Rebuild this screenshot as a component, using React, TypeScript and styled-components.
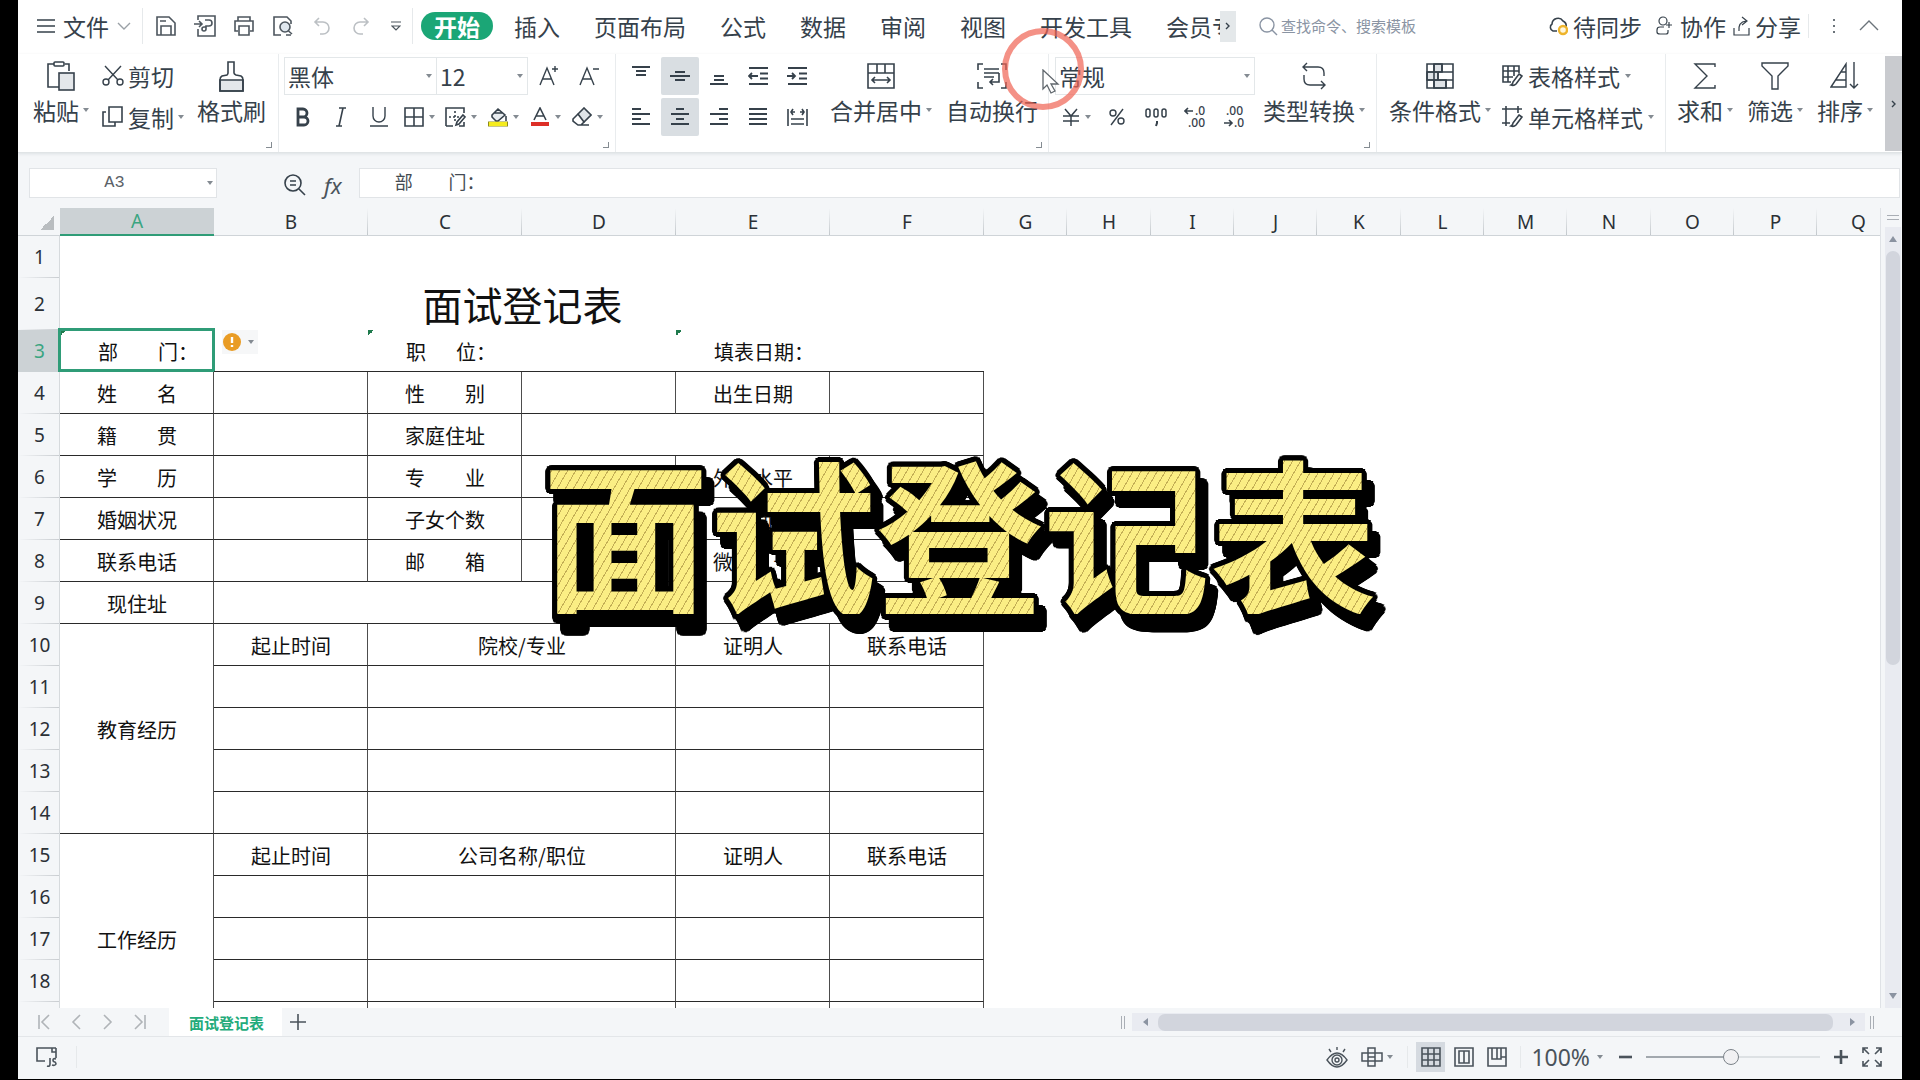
import React from "react";
import styled, { createGlobalStyle, css } from "styled-components";

const UI_FONT = `"Noto Sans CJK SC", "Noto Sans", sans-serif`;
const LATIN_FONT = `"Noto Sans", "Open Sans", "Noto Sans CJK SC", sans-serif`;
const INK = "#36414b";
const GREEN = "#1ba676";
const PANEL = "#f4f6f8";

const GlobalStyle = createGlobalStyle`
  *, *::before, *::after { box-sizing: border-box; }
  body { margin: 0; background: #000; font-family: ${UI_FONT}; color: ${INK}; }
  button, input, select { font: inherit; color: inherit; margin: 0; padding: 0; border: 0; background: none; outline: none; }
  button { cursor: default; white-space: nowrap; }
  select { appearance: none; }
`;

/* ---------- window ---------- */

const Screen = styled.div`
  height: 100vh;
  padding: 0 18px 1px;
  overflow: hidden;
  background: #000;
`;

const Window = styled.main`
  position: relative;
  display: flex;
  flex-direction: column;
  height: 100%;
  overflow: hidden;
  background: #fff;
`;

/* ---------- drawing helpers ---------- */

const Svg = styled.svg`
  display: block;
  flex: none;
  fill: none;
  stroke: currentColor;
  stroke-width: 1.6;
`;

type IconProps = { w: number; h: number; children: React.ReactNode; sw?: number };
const Icon = ({ w, h, children, sw }: IconProps) => (
  <Svg width={w} height={h} viewBox={`0 0 ${w} ${h}`} style={sw ? { strokeWidth: sw } : undefined} aria-hidden="true">
    {children}
  </Svg>
);

const CaretShape = styled.span`
  flex: none;
  width: 0;
  height: 0;
  border: 3px solid transparent;
  border-top: 4px solid #848b92;
  border-bottom: 0;
`;

/* ---------- top bar ---------- */

const TopBar = styled.header`
  display: flex;
  align-items: center;
  flex: none;
  height: 54px;
  padding: 0 23px 2px 19px;
  font-size: 23px;
  line-height: 32px;
`;

const FileButton = styled.button`
  display: flex;
  align-items: center;
  gap: 8px;
  margin-right: 11px;
  & > svg:last-child { color: #9aa0a6; }
`;

const Rule = styled.span<{ $h: number }>`
  flex: none;
  width: 1px;
  height: ${(p) => p.$h}px;
  background: #e6e9eb;
`;

const QuickBar = styled.div`
  display: flex;
  align-items: center;
  padding-left: 3px;
`;

const QuickButton = styled.button<{ $w?: number; $dim?: boolean }>`
  display: flex;
  justify-content: center;
  width: ${(p) => p.$w ?? 39}px;
  color: ${(p) => (p.$dim ? "#bcc0c4" : "#4d565e")};
`;

const TabList = styled.nav`
  display: flex;
  align-items: center;
  gap: 8px;
  flex: 0 0 799px;
  margin-left: 8px;
  padding: 6px 0;
  overflow: hidden;
`;

const MenuTab = styled.button<{ $on?: boolean }>`
  flex: none;
  height: 28px;
  padding: 0 13px;
  border-radius: 14px;
  line-height: 28px;
  ${(p) =>
    p.$on &&
    css`
      background: ${GREEN};
      color: #fff;
      font-weight: 700;
    `}
`;

const MoreTabs = styled.button`
  display: grid;
  place-items: center;
  flex: none;
  width: 16px;
  height: 31px;
  background: #e4e8ea;
`;

const SearchLabel = styled.label`
  display: flex;
  align-items: center;
  flex: 1;
  min-width: 0;
  gap: 2px;
  margin-left: 23px;
  color: #8a94a3;
`;

const SearchInput = styled.input`
  width: 160px;
  font-size: 15px;
  line-height: 24px;
  &::placeholder { color: #8a94a3; opacity: 1; }
`;

const Account = styled.div`
  display: flex;
  align-items: center;
`;

const AccountButton = styled.button`
  display: flex;
  align-items: center;
  gap: 5px;
  margin-right: 7px;
`;

const Trail = styled.div`
  display: flex;
  align-items: center;
  gap: 23px;
  color: #6b737a;
`;

/* ---------- ribbon ---------- */

const Ribbon = styled.section`
  display: flex;
  flex: none;
  height: 99px;
  border-bottom: 1px solid #e0e4e6;
  box-shadow: 0 1px 3px rgba(60, 80, 90, 0.12);
  font-size: 23px;
  line-height: 30px;
  z-index: 1;
`;

const Group = styled.div<{ $l: number; $r: number }>`
  display: flex;
  flex-direction: column;
  flex: none;
  padding: 3px 6px 0 ${(p) => p.$l}px;
  border-right: 1px solid #e9ecee;
  & > :first-child { padding-right: ${(p) => p.$r}px; }
`;

const LastGroup = styled(Group)`
  flex: 1;
  border-right: 0;
`;

const GroupBody = styled.div<{ $gap: number }>`
  display: flex;
  gap: ${(p) => p.$gap}px;
`;

const Launcher = styled.button`
  align-self: flex-end;
  width: 6px;
  height: 6px;
  margin-top: 6px;
  border-right: 1px solid #858c92;
  border-bottom: 1px solid #858c92;
`;

const BigButton = styled.button`
  display: flex;
  flex-direction: column;
  align-items: center;
  gap: 4px;
  height: 79px;
  padding-top: 4px;
`;

const BigIcon = styled.span`
  display: grid;
  place-items: center;
  height: 30px;
`;

const BigLabel = styled.span`
  display: flex;
  align-items: center;
  gap: 4px;
`;

const Rows = styled.div`
  display: grid;
  grid-template-rows: 38px 38px;
  row-gap: 3px;
`;

const Row = styled.div<{ $gap?: number }>`
  display: flex;
  align-items: center;
  gap: ${(p) => p.$gap ?? 0}px;
`;

const TextButton = styled.button<{ $gap: number }>`
  display: flex;
  align-items: center;
  gap: ${(p) => p.$gap}px;
`;

const ToolButton = styled.button<{ $w?: number; $on?: boolean }>`
  display: flex;
  align-items: center;
  justify-content: center;
  gap: 5px;
  width: ${(p) => p.$w ?? 39}px;
  height: 38px;
  border-radius: 2px;
  background: ${(p) => (p.$on ? "#d9dee2" : "none")};
`;

const SelectBox = styled.span<{ $w: number }>`
  display: flex;
  align-items: center;
  width: ${(p) => p.$w}px;
  height: 38px;
  padding: 0 4px 0 3px;
  border: 1px solid #e3e7e9;
  & + & { margin-left: -1px; }
`;

const PlainSelect = styled.select`
  flex: 1;
  min-width: 0;
  height: 34px;
`;

const RibbonScroll = styled.button`
  display: grid;
  place-items: center;
  flex: none;
  width: 17px;
  height: 95px;
  margin-top: 2px;
  background: #c9cbcf;
`;

type BigProps = { label: string; icon: React.ReactNode; caret?: boolean };
const Big = ({ label, icon, caret }: BigProps) => (
  <BigButton>
    <BigIcon>{icon}</BigIcon>
    <BigLabel>
      {label}
      {caret && <CaretShape />}
    </BigLabel>
  </BigButton>
);

/* ---------- formula bar ---------- */

const FormulaBar = styled.section`
  display: flex;
  align-items: center;
  flex: none;
  height: 55px;
  padding: 4px 2px 0 11px;
  background: ${PANEL};
`;

const NameBox = styled.label`
  display: flex;
  align-items: center;
  width: 188px;
  height: 30px;
  padding-right: 3px;
  border: 1px solid #e1e4e7;
  background: #fff;
`;

const NameInput = styled.input`
  flex: 1;
  min-width: 0;
  padding-right: 8px;
  text-align: center;
  font: 17px "Liberation Mono", monospace;
  color: #5b6268;
`;

const FormulaTools = styled.div`
  display: flex;
  align-items: center;
  gap: 18px;
  margin: 4px 17px 0 67px;
`;

const FxButton = styled.button`
  font: italic 22px/24px ${LATIN_FONT};
  color: #4a535b;
`;

const FormulaInput = styled.input`
  flex: 1;
  height: 30px;
  padding: 0 0 4px 35px;
  border: 1px solid #e1e4e7;
  background: #fff;
  font-size: 18px;
  color: #444b52;
`;

/* ---------- grid ---------- */

const Workspace = styled.section`
  display: flex;
  flex: 1;
  min-height: 0;
  background: ${PANEL};
`;

const SheetView = styled.div`
  flex: 1;
  min-width: 0;
  overflow: hidden;
  border-right: 1px solid #dfe2e6;
  background: #fff;
`;

const Sheet = styled.table`
  width: 0;
  table-layout: fixed;
  border-collapse: separate;
  border-spacing: 0;
  font-size: 20px;
  line-height: 26px;
  color: #111;
  white-space: pre;
`;

const SheetRow = styled.tr<{ $h: number }>`
  height: ${(p) => p.$h}px;
`;

const ColHead = styled.th<{ $on?: boolean }>`
  height: 28px;
  padding: 0;
  border-bottom: 1px solid #cfd4d8;
  background: linear-gradient(to bottom, transparent, #c3c8cc) right / 1px 100% no-repeat ${PANEL};
  font: 19px/24px ${LATIN_FONT};
  color: #2b3036;
  ${(p) =>
    p.$on &&
    css`
      border-bottom: 2px solid #2f9c77;
      background: #ccd2d5;
      color: #3aa581;
    `}
`;

const CornerHead = styled(ColHead)`
  background: linear-gradient(135deg, transparent 50%, #b9bdc0 50%) 22px 8px / 14px 14px no-repeat ${PANEL};
`;

const RowHead = styled.th<{ $on?: boolean }>`
  padding: 0 0 0 2px;
  border-right: 1px solid #d6dadd;
  background: linear-gradient(to right, transparent, #c9cdd1) bottom / 100% 1px no-repeat ${PANEL};
  font: 19px/24px ${LATIN_FONT};
  color: #2b3036;
  ${(p) =>
    p.$on &&
    css`
      background: #ccd2d5;
      color: #3aa581;
    `}
`;

const Cell = styled.td<{ $r?: boolean; $b?: boolean; $left?: boolean; $flag?: boolean; $big?: boolean }>`
  position: relative;
  padding: 2px 0 0 ${(p) => (p.$left ? 38 : 1)}px;
  text-align: ${(p) => (p.$left ? "left" : "center")};
  border-right: ${(p) => (p.$r ? "1px solid #4d4d4d" : "0")};
  border-bottom: ${(p) => (p.$b ? "1px solid #2a2a2a" : "0")};
  ${(p) =>
    p.$big &&
    css`
      padding-top: 0;
      font-size: 40px;
      line-height: 44px;
    `}
  ${(p) =>
    p.$flag &&
    css`
      background: linear-gradient(135deg, #1f7a4d 50%, transparent 50%) 0 0 / 6px 6px no-repeat;
    `}
`;

const SelectedCell = styled(Cell)`
  &::after {
    content: "";
    position: absolute;
    inset: -2px -1px 0 -2px;
    border: 3px solid #2f9c77;
  }
`;

const WarningTip = styled.button`
  position: absolute;
  top: 0;
  left: 8px;
  display: flex;
  align-items: center;
  gap: 7px;
  width: 36px;
  height: 24px;
  padding-left: 1px;
  background: #f6f7f8;
`;

/* ---------- scroll bars ---------- */

const VScroll = styled.div`
  display: flex;
  flex-direction: column;
  align-items: center;
  flex: none;
  width: 21px;
  padding: 7px 1px 0 4px;
`;

const VGrip = styled.span`
  width: 12px;
  height: 5px;
  margin-bottom: 7px;
  border: solid #a9aeb5;
  border-width: 1px 0;
`;

const VTrack = styled.div`
  display: flex;
  flex-direction: column;
  align-items: center;
  flex: 1;
  width: 100%;
  background: #e9ebf1;
`;

const VThumb = styled.div`
  width: 14px;
  height: 53%;
  border-radius: 7px;
  background: #d2d5dd;
`;

const Arrow = styled.button<{ $dir: "up" | "down" | "left" | "right" }>`
  display: grid;
  place-items: center;
  flex: none;
  width: ${(p) => (p.$dir === "left" || p.$dir === "right" ? 26 : 16)}px;
  height: ${(p) => (p.$dir === "up" || p.$dir === "down" ? 24 : 16)}px;
  &::before {
    content: "";
    border: 4px solid transparent;
    ${(p) => p.$dir === "up" && "border-bottom: 6px solid #8b93a1; border-top: 0;"}
    ${(p) => p.$dir === "down" && "border-top: 6px solid #8b93a1; border-bottom: 0;"}
    ${(p) => p.$dir === "left" && "border-right: 5px solid #8b93a1; border-left: 0;"}
    ${(p) => p.$dir === "right" && "border-left: 5px solid #8b93a1; border-right: 0;"}
  }
`;

const Spacer = styled.span`
  flex: 1;
`;

/* ---------- sheet tabs ---------- */

const SheetBar = styled.section`
  display: flex;
  align-items: center;
  flex: none;
  height: 29px;
  padding: 0 28px 0 10px;
  border-bottom: 1px solid #e3e6e9;
  background: ${PANEL};
`;

const NavButton = styled.button<{ $dark?: boolean }>`
  display: grid;
  place-items: center;
  width: 32px;
  height: 28px;
  color: ${(p) => (p.$dark ? "#4a535b" : "#b0b4b8")};
`;

const SheetTab = styled.button`
  height: 28px;
  margin-left: 13px;
  padding: 0 18px 0 20px;
  background: #fff;
  font-size: 15px;
  font-weight: 700;
  color: #24ab7b;
`;

const HGrip = styled.span`
  width: 4px;
  height: 13px;
  border: solid #a9aeb5;
  border-width: 0 1px;
`;

const HTrack = styled.div`
  display: flex;
  align-items: center;
  flex: 0 1 733px;
  height: 18px;
  margin: 0 5px 0 7px;
  background: #e9ebf1;
`;

const HThumb = styled.div`
  flex: 1;
  height: 17px;
  margin-right: 6px;
  border-radius: 7px;
  background: #d2d5dd;
`;

/* ---------- status bar ---------- */

const StatusBar = styled.footer`
  display: flex;
  align-items: center;
  flex: none;
  height: 42px;
  padding: 0 20px 2px 18px;
  background: ${PANEL};
  color: #4a535b;
`;

const StatusButton = styled.button<{ $gap?: number }>`
  display: flex;
  align-items: center;
  gap: 4px;
  margin-right: ${(p) => p.$gap ?? 0}px;
`;

const ViewSwitch = styled.div`
  display: flex;
  gap: 4px;
  margin: 0 9px 0 8px;
`;

const ViewButton = styled.button<{ $on?: boolean }>`
  display: grid;
  place-items: center;
  width: 29px;
  height: 30px;
  background: ${(p) => (p.$on ? "#d5dae0" : "none")};
`;

const ZoomButton = styled.button`
  display: flex;
  align-items: center;
  gap: 7px;
  margin: 0 16px 0 10px;
  font: 23px/28px ${LATIN_FONT};
`;

const ZoomSlider = styled.input`
  appearance: none;
  width: 174px;
  height: 18px;
  margin: 0 14px;
  &::-webkit-slider-runnable-track {
    height: 2px;
    background: linear-gradient(to right, #a2a8ae 48%, #dde1e4 48%);
  }
  &::-webkit-slider-thumb {
    appearance: none;
    width: 16px;
    height: 16px;
    margin-top: -7px;
    border: 1px solid #7b8289;
    border-radius: 50%;
    background: #f1f1f3;
  }
`;

/* ---------- overlays ---------- */

const ClickRing = styled.span`
  position: absolute;
  top: 28px;
  left: 984px;
  width: 82px;
  height: 82px;
  border: 6px solid rgba(240, 98, 82, 0.7);
  border-radius: 50%;
  z-index: 3;
  pointer-events: none;
`;

const Pointer = styled.span`
  position: absolute;
  top: 69px;
  left: 1024px;
  color: #5f666c;
  z-index: 4;
`;

/* An even outline of radius r, repeated once as a hard drop shadow. */
const ring = (dx: number, dy: number, r: number) =>
  Array.from({ length: 24 }, (_, i) => {
    const a = (i / 24) * Math.PI * 2;
    return `${(dx + Math.cos(a) * r).toFixed(2)}px ${(dy + Math.sin(a) * r).toFixed(2)}px 0 #000`;
  }).join(",");

const Caption = styled.h1`
  position: absolute;
  top: 446px;
  left: 524px;
  margin: 0;
  z-index: 5;
  font-size: 167px;
  line-height: 168px;
  font-weight: 700;
  white-space: nowrap;
  color: #000;
  text-shadow: ${ring(0, 0, 5)}, ${ring(8, 12, 5)};
  &::after {
    content: attr(data-fill);
    position: absolute;
    inset: 0;
    text-shadow: none;
    color: transparent;
    background: repeating-linear-gradient(120deg, #fbee84 0 6px, #c3ae55 6px 7px);
    background-clip: text;
    -webkit-background-clip: text;
  }
`;

/* ---------- data ---------- */

const menuTabs = ["开始", "插入", "页面布局", "公式", "数据", "审阅", "视图", "开发工具", "会员专享"];
const colWidths = [154, 154, 154, 154, 154, 154, 83, 84, 83, 83, 84, 83, 83, 84, 83, 83, 83];
const letters = "ABCDEFGHIJKLMNOPQ".split("");

type CellSpec = { t?: string; span?: number; rows?: number };
const formRows: { n: number; cells: CellSpec[] }[] = [
  { n: 4, cells: [{ t: "姓　　名" }, {}, { t: "性　　别" }, {}, { t: "出生日期" }, {}] },
  { n: 5, cells: [{ t: "籍　　贯" }, {}, { t: "家庭住址" }, { span: 3 }] },
  { n: 6, cells: [{ t: "学　　历" }, {}, { t: "专　　业" }, {}, { t: "外语水平" }, {}] },
  { n: 7, cells: [{ t: "婚姻状况" }, {}, { t: "子女个数" }, {}, { t: "政治面貌" }, {}] },
  { n: 8, cells: [{ t: "联系电话" }, {}, { t: "邮　　箱" }, {}, { t: "微\u2002信\u2002号" }, {}] },
  { n: 9, cells: [{ t: "现住址" }, { span: 5 }] },
  { n: 10, cells: [{ t: "教育经历", rows: 5 }, { t: "起止时间" }, { t: "院校/专业", span: 2 }, { t: "证明人" }, { t: "联系电话" }] },
  ...[11, 12, 13, 14].map((n) => ({ n, cells: [{}, { span: 2 }, {}, {}] })),
  { n: 15, cells: [{ t: "工作经历", rows: 5 }, { t: "起止时间" }, { t: "公司名称/职位", span: 2 }, { t: "证明人" }, { t: "联系电话" }] },
  ...[16, 17, 18, 19].map((n) => ({ n, cells: [{}, { span: 2 }, {}, {}] })),
];

/* ---------- icons ---------- */

const lines = (w: number, list: [number, number, number][]) => (
  <Icon w={w} h={22} sw={2}>
    <path d={list.map(([x1, x2, y]) => `M${x1} ${y}H${x2}`).join("")} />
  </Icon>
);

const alignIcons = {
  top: lines(18, [[0, 18, 2], [4, 14, 6], [4, 14, 10]]),
  middle: lines(20, [[5, 15, 7], [0, 20, 11], [5, 15, 15]]),
  bottom: lines(18, [[4, 14, 11], [4, 14, 15], [0, 18, 19]]),
  left: lines(18, [[0, 9, 3], [0, 18, 8], [0, 9, 13], [0, 18, 18]]),
  center: lines(18, [[5, 13, 3], [0, 18, 8], [5, 13, 13], [0, 18, 18]]),
  right: lines(18, [[9, 18, 3], [0, 18, 8], [9, 18, 13], [0, 18, 18]]),
  justify: lines(18, [[0, 18, 3], [0, 18, 8], [0, 18, 13], [0, 18, 18]]),
};

const indentIcon = (dir: "out" | "in") => (
  <Icon w={20} h={20} sw={1.8}>
    <path d="M1 2H20M12 7.500H20M12 12.500H20M1 18H20" />
    <path d={dir === "out" ? "M10 10H1M4 7L1 10L4 13" : "M0 10H8M5 7L8 10L5 13"} />
  </Icon>
);

const decimalIcon = (dir: "less" | "more") => (
  <Svg width={22} height={24} viewBox="0 0 22 24" aria-hidden="true">
    <g fill="currentColor" stroke="none" fontFamily="Noto Sans" fontSize="12" fontWeight="500">
      <text x={dir === "less" ? 11 : 3} y="10">{dir === "less" ? ".0" : ".00"}</text>
      <text x={dir === "less" ? 4 : 11} y="22">{dir === "less" ? ".00" : ".0"}</text>
    </g>
    <path d={dir === "less" ? "M9 6H1M4 3L1 6L4 9" : "M1 18H9M6 15L9 18L6 21"} />
  </Svg>
);

const brush = "M17 9L20 11L14 19Q12 21 9 20Q11 19 11 17Z";

/* ---------- page ---------- */

export default function App() {
  return (
    <Screen>
      <GlobalStyle />
      <Window>
        <TopBar>
          <FileButton>
            <Icon w={18} h={16} sw={1.5}><path d="M0 2H18M0 8H18M0 14H18" /></Icon>
            文件
            <Icon w={14} h={8} sw={1.4}><path d="M1 1L7 7L13 1" /></Icon>
          </FileButton>
          <Rule $h={36} />
          <QuickBar>
            <QuickButton aria-label="保存">
              <Icon w={20} h={20}><path d="M1 1H13L19 7V19H1ZM5 19V10H15V19M4 5H10" /></Icon>
            </QuickButton>
            <QuickButton aria-label="输出为PDF">
              <Icon w={22} h={22}><path d="M4 5V1H21V21H4V14M0 9H7M5 6L8 9L5 12M11 5H15A3 3 0 0 1 15 11H12V14A2 2 0 1 1 10 12H12" /></Icon>
            </QuickButton>
            <QuickButton aria-label="打印">
              <Icon w={20} h={20}><path d="M4 5V1H16V5M4 15H1V5H19V15H16M5 10H15V19H5Z" /></Icon>
            </QuickButton>
            <QuickButton aria-label="打印预览">
              <Icon w={20} h={20}><path d="M8 19H1V1H14L18 5V8M13 19H18M15.500 15L19 18" /><circle cx="12" cy="11" r="5" fill="#dfe7ee" /></Icon>
            </QuickButton>
            <QuickButton $dim aria-label="撤销">
              <Icon w={18} h={18}><path d="M6 1L2 5L6 9M2 5H10A6 6 0 0 1 10 17H7" /></Icon>
            </QuickButton>
            <QuickButton $dim aria-label="恢复">
              <Icon w={18} h={18}><path d="M12 1L16 5L12 9M16 5H8A6 6 0 0 0 8 17H11" /></Icon>
            </QuickButton>
            <QuickButton $w={32} aria-label="自定义快速访问工具栏">
              <Icon w={10} h={10} sw={1.2}><path d="M0 1H10M1 5L5 9L9 5Z" /></Icon>
            </QuickButton>
          </QuickBar>
          <Rule $h={36} />
          <TabList>
            {menuTabs.map((t, i) => (
              <MenuTab key={t} $on={i === 0}>{t}</MenuTab>
            ))}
          </TabList>
          <MoreTabs aria-label="更多选项卡">
            <Icon w={6} h={8} sw={1.4}><path d="M1 1L4 4L1 7" /></Icon>
          </MoreTabs>
          <SearchLabel>
            <Icon w={20} h={20} sw={1.4}><circle cx="8" cy="9" r="7" /><path d="M13 14L18 19" /></Icon>
            <SearchInput aria-label="查找命令、搜索模板" placeholder="查找命令、搜索模板" />
          </SearchLabel>
          <Account>
            <AccountButton>
              <Icon w={20} h={20}>
                <path d="M9 15H5A4 4 0 0 1 4 8A6 6 0 0 1 15 5Q19 7 18 11" />
                <circle cx="15" cy="14" r="4" stroke="#eeb42c" strokeWidth="2.400" fill="#fff6dc" />
              </Icon>
              待同步
            </AccountButton>
            <AccountButton>
              <Icon w={26} h={20} sw={1.2}>
                <circle cx="14" cy="5" r="4" /><path d="M15 11H11Q8 11 8 14V16Q8 18 11 18H17Q19 18 19 16V14M20 6V12M17 9H23" />
              </Icon>
              协作
            </AccountButton>
            <AccountButton>
              <Icon w={17} h={20} sw={1.2}><path d="M1 12V19H16V12M6 15Q5 6 13 5M9 1L14 5L9 9" /></Icon>
              分享
            </AccountButton>
            <Trail>
              <Rule $h={24} />
              <Icon w={4} h={16} sw={2}><path d="M2 1V3M2 7V9M2 13V15" /></Icon>
              <Icon w={20} h={12} sw={1.4}><path d="M1 10L10 1L19 10" /></Icon>
            </Trail>
          </Account>
        </TopBar>

        <Ribbon>
          <Group $l={15} $r={6}>
            <GroupBody $gap={13}>
              <Big
                caret
                label="粘贴"
                icon={
                  <Icon w={28} h={30}>
                    <path d="M7 3H1V26H12M18 3H22V10" /><rect x="7" y="1" width="10" height="4" rx="1" />
                    <rect x="12" y="12" width="15" height="17" fill="#e4e7ea" />
                  </Icon>
                }
              />
              <Rows>
                <Row>
                  <TextButton $gap={4}>
                    <Icon w={22} h={22} sw={1.4}>
                      <path d="M3 1L16 15M19 1L6 15" /><circle cx="4" cy="17" r="3" /><circle cx="18" cy="17" r="3" />
                    </Icon>
                    剪切
                  </TextButton>
                </Row>
                <Row>
                  <TextButton $gap={4}>
                    <Icon w={22} h={22}><path d="M7 1H20V16H7ZM4 6H1V20H13V16" /></Icon>
                    复制
                    <CaretShape />
                  </TextButton>
                </Row>
              </Rows>
              <Big
                label="格式刷"
                icon={
                  <Icon w={26} h={31}>
                    <path d="M1 19H24V30H1Z" fill="#e4e7ea" />
                    <path d="M9 1H15V12Q15 13 17 14L22 15Q24 16 24 19V30H1V19Q1 16 3 15L8 14Q9 13 9 12Z" />
                  </Icon>
                }
              />
            </GroupBody>
            <Launcher aria-label="剪贴板" />
          </Group>

          <Group $l={5} $r={1}>
            <Rows>
              <Row>
                <SelectBox $w={153}>
                  <PlainSelect aria-label="字体"><option>黑体</option></PlainSelect>
                  <CaretShape />
                </SelectBox>
                <SelectBox $w={92}>
                  <PlainSelect aria-label="字号"><option>12</option></PlainSelect>
                  <CaretShape />
                </SelectBox>
                <ToolButton $w={42} aria-label="增大字号">
                  <Icon w={20} h={22} sw={1.4}><path d="M1 20L8 3L15 20M4 14H12M13 4H19M16 1V7" /></Icon>
                </ToolButton>
                <ToolButton $w={38} aria-label="减小字号">
                  <Icon w={20} h={22} sw={1.4}><path d="M1 20L8 3L15 20M4 14H12M14 4H20" /></Icon>
                </ToolButton>
              </Row>
              <Row>
                <ToolButton $w={38} aria-label="加粗">
                  <Icon w={16} h={20} sw={2.8}><path d="M3 2H8A4 4 0 0 1 8 10H3ZM3 10H9A4 4 0 0 1 9 18H3Z" /></Icon>
                </ToolButton>
                <ToolButton $w={38} aria-label="倾斜">
                  <Icon w={12} h={20} sw={1.6}><path d="M4 1H11M1 19H7M8 1L4 19" /></Icon>
                </ToolButton>
                <ToolButton $w={38} aria-label="下划线">
                  <Icon w={20} h={22} sw={1.4}><path d="M4 1V10A6 6 0 0 0 16 10V1M1 20H19" /></Icon>
                </ToolButton>
                <ToolButton $w={42} aria-label="边框">
                  <Icon w={20} h={20}><path d="M1 1H19V19H1ZM10 1V19M1 10H19" /></Icon>
                  <CaretShape />
                </ToolButton>
                <ToolButton $w={42} aria-label="绘图边框">
                  <Icon w={21} h={20}>
                    <path d="M1 19V1H19V6M1 19H8M19 15V19H14" /><path d="M10 4V15M4 10H14" strokeDasharray="2 2" />
                    <path d="M18 8L20 10L14 17L11 18L12 15Z" />
                  </Icon>
                  <CaretShape />
                </ToolButton>
                <ToolButton $w={42} aria-label="填充颜色">
                  <Icon w={20} h={20}>
                    <path d="M4 8L10 2L17 8L10 14H8L4 10ZM6 6H14M18 9V14" fill="#e9edf0" />
                    <path d="M0 17H20" stroke="#8d8a1c" strokeWidth="5" /><path d="M1 17H19" stroke="#f5ec1e" strokeWidth="4" />
                  </Icon>
                  <CaretShape />
                </ToolButton>
                <ToolButton $w={42} aria-label="字体颜色">
                  <Icon w={20} h={20}><path d="M4 13L10 1L16 13M6 9H14" /><path d="M1 17H19" stroke="#dd2f27" strokeWidth="4" /></Icon>
                  <CaretShape />
                </ToolButton>
                <ToolButton $w={42} aria-label="清除">
                  <Icon w={20} h={20}><path d="M6 7L12 1L19 8L12 15Z" fill="#dfe4e8" /><path d="M6 7L1 12V14L6 18H9L12 15M6 18H17" /></Icon>
                  <CaretShape />
                </ToolButton>
              </Row>
            </Rows>
            <Launcher aria-label="字体设置" />
          </Group>

          <Group $l={6} $r={4}>
            <GroupBody $gap={14}>
              <Rows>
                <Row $gap={1}>
                  <ToolButton $w={38} aria-label="顶端对齐">{alignIcons.top}</ToolButton>
                  <ToolButton $w={38} $on aria-label="垂直居中">{alignIcons.middle}</ToolButton>
                  <ToolButton $w={38} aria-label="底端对齐">{alignIcons.bottom}</ToolButton>
                  <ToolButton $w={38} aria-label="减少缩进量">{indentIcon("out")}</ToolButton>
                  <ToolButton $w={38} aria-label="增加缩进量">{indentIcon("in")}</ToolButton>
                </Row>
                <Row $gap={1}>
                  <ToolButton $w={38} aria-label="左对齐">{alignIcons.left}</ToolButton>
                  <ToolButton $w={38} $on aria-label="水平居中">{alignIcons.center}</ToolButton>
                  <ToolButton $w={38} aria-label="右对齐">{alignIcons.right}</ToolButton>
                  <ToolButton $w={38} aria-label="两端对齐">{alignIcons.justify}</ToolButton>
                  <ToolButton $w={38} aria-label="分散对齐">
                    <Icon w={21} h={20}>
                      <path d="M1 2V19M20 2V19M4 12H17M4 17H17M4 5H8M13 5H17M6 2L4 5L6 8M15 2L17 5L15 8" />
                    </Icon>
                  </ToolButton>
                </Row>
              </Rows>
              <Big
                caret
                label="合并居中"
                icon={
                  <Icon w={28} h={26}><path d="M1 1H27V25H1ZM1 10H27M10 1V10M18 1V10M5 17H23M8 14L5 17L8 20M20 14L23 17L20 20" /></Icon>
                }
              />
              <Big
                label="自动换行"
                icon={
                  <Icon w={30} h={26}>
                    <path d="M6 1H1V7M24 1H29V7M1 19V25H6M29 19V25H24" />
                    <path d="M7 6H22M7 10H22M7 14H17M22 10V19H13M16 16L13 19L16 22" />
                  </Icon>
                }
              />
            </GroupBody>
            <Launcher aria-label="对齐设置" />
          </Group>

          <Group $l={6} $r={5}>
            <GroupBody $gap={8}>
              <Rows>
                <Row>
                  <SelectBox $w={200}>
                    <PlainSelect aria-label="数字格式"><option>常规</option></PlainSelect>
                    <CaretShape />
                  </SelectBox>
                </Row>
                <Row>
                  <ToolButton $w={42} aria-label="货币格式">
                    <Icon w={18} h={20} sw={1.5}><path d="M3 2L9 9L15 2M1 9H17M1 14H17M9 9V19" /></Icon>
                    <CaretShape />
                  </ToolButton>
                  <ToolButton aria-label="百分比样式">
                    <Icon w={16} h={18} sw={1.4}><circle cx="4" cy="5" r="3" /><circle cx="12" cy="13" r="3" /><path d="M14 1L2 17" /></Icon>
                  </ToolButton>
                  <ToolButton aria-label="千位分隔样式">
                    <Icon w={22} h={22} sw={1.5}>
                      <rect x="1" y="3" width="4" height="8" rx="2" /><rect x="9" y="3" width="4" height="8" rx="2" />
                      <rect x="17" y="3" width="4" height="8" rx="2" /><path d="M12 15V17L11 20" strokeWidth="2" />
                    </Icon>
                  </ToolButton>
                  <ToolButton aria-label="增加小数位数">{decimalIcon("less")}</ToolButton>
                  <ToolButton aria-label="减少小数位数">{decimalIcon("more")}</ToolButton>
                </Row>
              </Rows>
              <Big
                caret
                label="类型转换"
                icon={
                  <Icon w={26} h={28} sw={1.4}><path d="M6 1L2 5L6 9M2 5H17Q23 5 23 11V14M3 13V17Q3 23 9 23H24M20 19L24 23L20 27" /></Icon>
                }
              />
            </GroupBody>
            <Launcher aria-label="数字格式设置" />
          </Group>

          <Group $l={12} $r={5}>
            <GroupBody $gap={11}>
              <Big
                caret
                label="条件格式"
                icon={
                  <Icon w={28} h={26}>
                    <path d="M8 1H16V9H8ZM1 9H12V17H1ZM8 17H20V25H8Z" fill="#dfe3e7" />
                    <path d="M1 1H27V25H1ZM1 9H27M1 17H27M8 1V25M16 1V9M12 9V17M20 17V25" />
                  </Icon>
                }
              />
              <Rows>
                <Row>
                  <TextButton $gap={5}>
                    <Icon w={21} h={22}><path d="M9 17H1V1H17V8M1 6H17M1 12H11M6 1V17M12 1V11" /><path d={brush} fill="#fff" /></Icon>
                    表格样式
                    <CaretShape />
                  </TextButton>
                </Row>
                <Row>
                  <TextButton $gap={5}>
                    <Icon w={21} h={22}><path d="M0 3H20M4 0V20M16 0V7M0 17H8" /><path d={brush} fill="#fff" /></Icon>
                    单元格样式
                    <CaretShape />
                  </TextButton>
                </Row>
              </Rows>
            </GroupBody>
          </Group>

          <LastGroup $l={11} $r={0}>
            <GroupBody $gap={14}>
              <Big caret label="求和" icon={<Icon w={24} h={26} sw={1.4}><path d="M22 4V1H2L14 13L2 25H22V22" /></Icon>} />
              <Big caret label="筛选" icon={<Icon w={28} h={28} sw={1.4}><path d="M1 1H27V4L17 14V27H11V14L1 4Z" /></Icon>} />
              <Big
                caret
                label="排序"
                icon={<Icon w={30} h={28} sw={1.4}><path d="M1 25L16 2V25ZM6 18H16M11 10H16M24 0V26M20 22L24 26L28 22" /></Icon>}
              />
            </GroupBody>
          </LastGroup>
          <RibbonScroll aria-label="向右滚动">
            <Icon w={6} h={8} sw={1.4}><path d="M1 1L4 4L1 7" /></Icon>
          </RibbonScroll>
        </Ribbon>

        <FormulaBar>
          <NameBox>
            <NameInput aria-label="名称框" defaultValue="A3" />
            <CaretShape />
          </NameBox>
          <FormulaTools>
            <Icon w={22} h={22}><circle cx="9" cy="9" r="8" /><path d="M15 15L21 21M6 7H12M6 11H12" /></Icon>
            <FxButton>fx</FxButton>
          </FormulaTools>
          <FormulaInput aria-label="编辑栏" defaultValue="部　　门：" />
        </FormulaBar>

        <Workspace>
          <SheetView>
            <Sheet>
              <colgroup>
                <col style={{ width: 42 }} />
                {colWidths.map((w, i) => <col key={i} style={{ width: w }} />)}
              </colgroup>
              <thead>
                <tr>
                  <CornerHead aria-label="全选" />
                  {letters.map((l, i) => <ColHead key={l} $on={i === 0}>{l}</ColHead>)}
                </tr>
              </thead>
              <tbody>
                <SheetRow $h={42}><RowHead>1</RowHead><Cell colSpan={17} /></SheetRow>
                <SheetRow $h={52}>
                  <RowHead>2</RowHead>
                  <Cell colSpan={6} $big>面试登记表</Cell>
                  <Cell colSpan={11} />
                </SheetRow>
                <SheetRow $h={42}>
                  <RowHead $on>3</RowHead>
                  <SelectedCell $left $flag>部　　门：</SelectedCell>
                  <Cell $b>
                    <WarningTip aria-label="错误提示">
                      <Icon w={18} h={18} sw={2.4}>
                        <circle cx="9" cy="9" r="9" fill="#e99c25" stroke="none" />
                        <path d="M9 4V10M9 12V14" stroke="#fff" />
                      </Icon>
                      <CaretShape />
                    </WarningTip>
                  </Cell>
                  <Cell $left $flag $b>{"职　\u2002位："}</Cell>
                  <Cell $b />
                  <Cell $left $flag $b>填表日期：</Cell>
                  <Cell $b />
                  <Cell colSpan={11} />
                </SheetRow>
                {formRows.map((r) => (
                  <SheetRow key={r.n} $h={42}>
                    <RowHead>{r.n}</RowHead>
                    {r.cells.map((c, i) => (
                      <Cell key={i} colSpan={c.span} rowSpan={c.rows} $r $b>{c.t}</Cell>
                    ))}
                    <Cell colSpan={11} />
                  </SheetRow>
                ))}
              </tbody>
            </Sheet>
          </SheetView>
          <VScroll>
            <VGrip />
            <VTrack>
              <Arrow $dir="up" aria-label="向上滚动" />
              <VThumb />
              <Spacer />
              <Arrow $dir="down" aria-label="向下滚动" />
            </VTrack>
          </VScroll>
        </Workspace>

        <SheetBar>
          <NavButton aria-label="第一张"><Icon w={14} h={16}><path d="M2 1V15M12 1L5 8L12 15" /></Icon></NavButton>
          <NavButton aria-label="上一张"><Icon w={10} h={16}><path d="M9 1L2 8L9 15" /></Icon></NavButton>
          <NavButton aria-label="下一张"><Icon w={10} h={16}><path d="M1 1L8 8L1 15" /></Icon></NavButton>
          <NavButton aria-label="最后一张"><Icon w={14} h={16}><path d="M12 1V15M2 1L9 8L2 15" /></Icon></NavButton>
          <SheetTab>面试登记表</SheetTab>
          <NavButton $dark aria-label="新建工作表"><Icon w={16} h={16}><path d="M8 0V16M0 8H16" /></Icon></NavButton>
          <Spacer />
          <HGrip />
          <HTrack>
            <Arrow $dir="left" aria-label="向左滚动" />
            <HThumb />
            <Arrow $dir="right" aria-label="向右滚动" />
          </HTrack>
          <HGrip />
        </SheetBar>

        <StatusBar>
          <StatusButton $gap={18} aria-label="宏">
            <Icon w={22} h={22}>
              <path d="M9 15H1V2H20M16 2V6H20V2M20 6V12M11 20Q14 21 14 18V12M20 13Q17 12 17 14Q17 16 19 16Q20 17 20 18Q19 20 16 19" />
            </Icon>
          </StatusButton>
          <Rule $h={22} />
          <Spacer />
          <StatusButton $gap={13} aria-label="护眼模式">
            <Icon w={22} h={22} sw={1.4}>
              <path d="M1 14Q6 7 11 7Q16 7 21 14Q16 21 11 21Q6 21 1 14ZM11 1V4M3 3L5 6M19 3L17 6" />
              <circle cx="11" cy="14" r="5" /><circle cx="11" cy="14" r="2" />
            </Icon>
          </StatusButton>
          <StatusButton $gap={14} aria-label="阅读模式">
            <Icon w={22} h={20} sw={1.5}><path d="M1 6H21V14H1ZM7 1H14V19H7ZM7 10H14" /></Icon>
            <CaretShape />
          </StatusButton>
          <Rule $h={22} />
          <ViewSwitch>
            <ViewButton $on aria-label="普通视图"><Icon w={20} h={20}><path d="M1 1H19V19H1ZM7 1V19M13 1V19M1 7H19M1 13H19" /></Icon></ViewButton>
            <ViewButton aria-label="分页预览"><Icon w={20} h={20}><path d="M1 1H19V19H1ZM5 4H15V16H5ZM10 4V16" /></Icon></ViewButton>
            <ViewButton aria-label="页面布局"><Icon w={20} h={20}><path d="M1 1H19V19H1ZM5 1V12H14V1M10 1V12M14 10H19" /></Icon></ViewButton>
          </ViewSwitch>
          <Rule $h={22} />
          <ZoomButton>100%<CaretShape /></ZoomButton>
          <StatusButton aria-label="缩小"><Icon w={13} h={14} sw={2.6}><path d="M0 7H13" /></Icon></StatusButton>
          <ZoomSlider type="range" aria-label="缩放" min={0} max={100} defaultValue={49} />
          <StatusButton $gap={14} aria-label="放大"><Icon w={14} h={14} sw={2.6}><path d="M0 7H14M7 0V14" /></Icon></StatusButton>
          <StatusButton aria-label="全屏显示">
            <Icon w={20} h={20}><path d="M1 6V1H6M1 1L7 7M14 1H19V6M19 1L13 7M1 14V19H6M1 19L7 13M14 19H19V14M19 19L13 13" /></Icon>
          </StatusButton>
        </StatusBar>

        <ClickRing />
        <Pointer>
          <Icon w={18} h={26} sw={1.3}><path d="M1 1V20L5 16L9 24L13 22L9 15H16Z" fill="#fff" /></Icon>
        </Pointer>
        <Caption data-fill="面试登记表">面试登记表</Caption>
      </Window>
    </Screen>
  );
}
